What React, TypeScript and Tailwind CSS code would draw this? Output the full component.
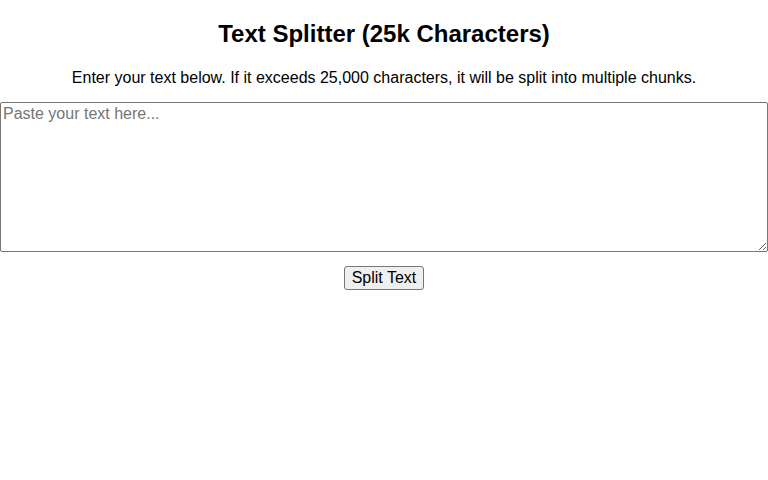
export default function App() {
  return (
    <div className="min-h-screen bg-white font-['Liberation_Sans',Arial,sans-serif] text-black">
      <h2 className="pt-[20px] text-center text-[24px] font-bold leading-[27.6px]">
        Text Splitter (25k Characters)
      </h2>
      <p className="mt-[21px] text-center text-[16px] leading-[18.4px]">
        Enter your text below. If it exceeds 25,000 characters, it will be split into multiple chunks.
      </p>
      <div className="mt-[15px] flex flex-col items-center">
        <textarea
          placeholder="Paste your text here..."
          className="block h-[150px] w-full resize-y rounded-[2px] border border-[#767676] bg-white p-[2px] text-[16px] leading-[18.4px] placeholder:text-[#757575]"
        />
        <button className="mt-[14px] h-[24px] rounded-[3px] border border-[#767676] bg-[#efefef] px-[7px] pt-[1px] text-[16px] leading-[18.4px]">
          Split Text
        </button>
      </div>
    </div>
  );
}
